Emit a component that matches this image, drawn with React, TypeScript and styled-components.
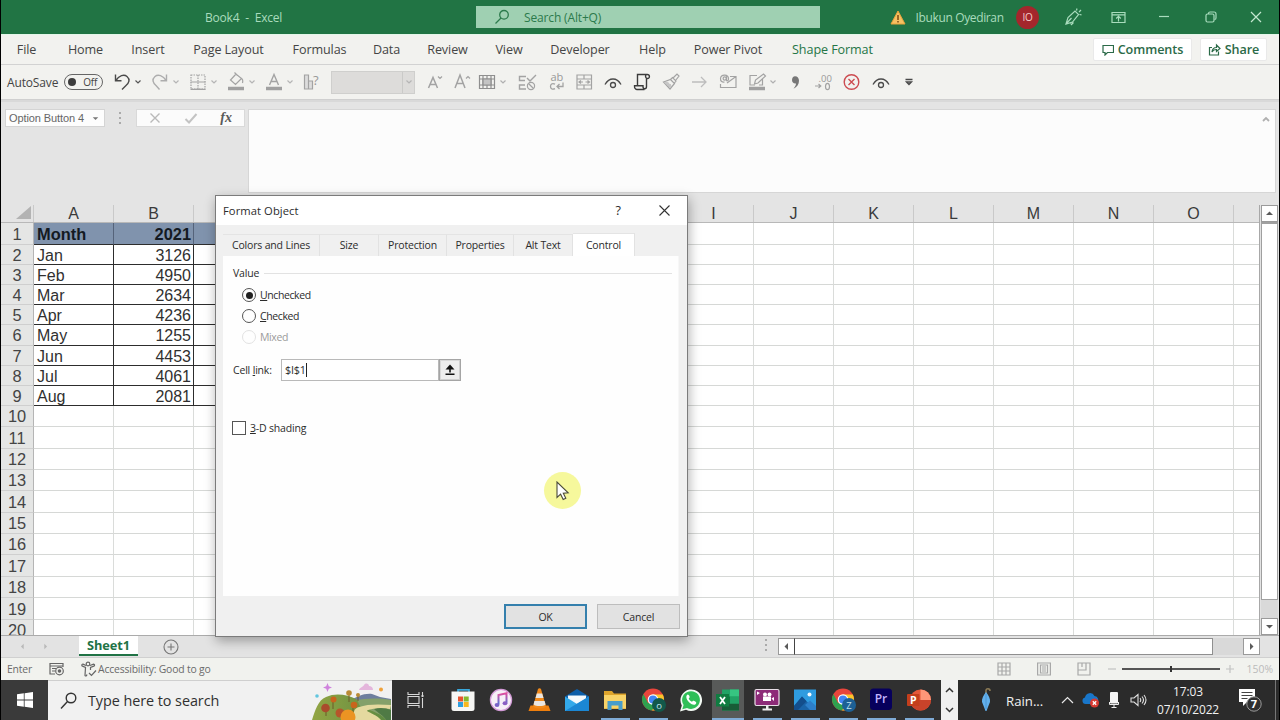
import React from "react";
import styled, { createGlobalStyle, css } from "styled-components";

const Global = createGlobalStyle`
  * { box-sizing: border-box; }
  body { margin: 0; background: #000; overflow: hidden; }
  svg { display: block; flex: none; }
`;
const ui = `"Open Sans", "Noto Sans", sans-serif`;
const arial = `"Liberation Sans", Arial, sans-serif`;

const Screen = styled.div`
  position: relative;
  width: 1280px;
  height: 720px;
  padding: 0 1px;
  background: #000;
  display: flex;
  flex-direction: column;
  overflow: hidden;
  font-family: ${ui};
  white-space: nowrap;
`;

/* ---------- title bar ---------- */
const TitleBar = styled.header`
  height: 34px;
  flex: none;
  background: #217444;
  display: flex;
  align-items: center;
  color: #a9dcbd;
  font-size: 12px;
`;
const DocName = styled.div`
  width: 475px;
  flex: none;
  padding-left: 204px;
  letter-spacing: -0.2px;
  white-space: pre;
`;
const SearchField = styled.div`
  width: 344px;
  flex: none;
  height: 22px;
  background: #9fd0b2;
  color: #2c7a4c;
  display: flex;
  align-items: center;
  padding-left: 18px;
  gap: 14px;
  letter-spacing: -0.15px;
`;
const Account = styled.div`
  flex: none;
  margin-left: 70px;
  display: flex;
  align-items: center;
  gap: 9.5px;
  letter-spacing: -0.36px;
  width: 149px;
`;
const Avatar = styled.div`
  width: 23px;
  height: 23px;
  flex: none;
  border-radius: 50%;
  background: #a4262c;
  color: #f3cccc;
  font-size: 10px;
  display: grid;
  place-items: center;
  margin-left: auto;
`;
const WindowTools = styled.div`
  display: flex;
  align-items: center;
  margin-left: 11px;
`;
const WindowTool = styled.div<{ $w: number }>`
  width: ${(p) => p.$w}px;
  display: grid;
  place-items: center;
`;

/* ---------- ribbon tabs ---------- */
const MenuBar = styled.nav`
  height: 31px;
  flex: none;
  background: #f2f2ef;
  border-top: 1px solid #e4f7ea;
  border-bottom: 1px solid #d2d2d2;
  display: flex;
  align-items: center;
  padding-left: 1px;
`;
const MenuItem = styled.div<{ $w: number; $green?: boolean }>`
  width: ${(p) => p.$w}px;
  text-align: center;
  font-size: 12.6px;
  letter-spacing: -0.1px;
  color: ${(p) => (p.$green ? "#257546" : "#454545")};
`;
const MenuButton = styled.div<{ $w: number; $ml: number }>`
  width: ${(p) => p.$w}px;
  margin-left: ${(p) => p.$ml}px;
  height: 23px;
  background: #fff;
  border: 1px solid #e9e9e9;
  border-radius: 2px;
  color: #2b6a48;
  font-weight: 600;
  font-size: 12.6px;
  letter-spacing: -0.05px;
  display: flex;
  align-items: center;
  justify-content: center;
  gap: 4px;
`;

/* ---------- quick access ---------- */
const QuickBar = styled.div`
  height: 35px;
  flex: none;
  background: #f2f2ef;
  border-bottom: 1px solid #cfcfcf;
  display: flex;
  align-items: center;
  padding-left: 6px;
`;
const AutoSave = styled.div`
  width: 102.5px;
  display: flex;
  align-items: center;
  gap: 6px;
  font-size: 12px;
  letter-spacing: -0.15px;
  color: #444;
`;
const Toggle = styled.div`
  width: 39px;
  height: 16px;
  border: 1px solid #666;
  border-radius: 8px;
  display: flex;
  align-items: center;
  gap: 7px;
  padding-left: 3px;
  font-size: 10px;
  &::before {
    content: "";
    width: 8px;
    height: 8px;
    border-radius: 50%;
    background: #3c3c3c;
  }
`;
const Tool = styled.div<{ $gap: number }>`
  margin-left: ${(p) => p.$gap}px;
  display: flex;
  align-items: center;
`;
const Combo = styled.div`
  width: 84px;
  height: 23px;
  margin-left: 7px;
  background: #dddcda;
  border: 1px solid #cfcfcd;
  display: flex;
  justify-content: flex-end;
`;
const ComboArrow = styled.div`
  width: 12px;
  border-left: 1px solid #cacac8;
  display: grid;
  place-items: center;
`;

/* ---------- formula area ---------- */
const FormulaArea = styled.div`
  height: 105px;
  flex: none;
  background: #e4e4e4;
  border-top: 2px solid #d9d9d9;
  display: flex;
  align-items: flex-start;
  padding: 7px 2px 0 4px;
`;
const NameBox = styled.div`
  width: 100px;
  height: 18px;
  flex: none;
  background: #fdfdfd;
  border: 1px solid #d4d4d4;
  font-family: ${arial};
  font-size: 11px;
  letter-spacing: -0.1px;
  color: #666;
  display: flex;
  align-items: center;
  justify-content: space-between;
  padding: 0 5px 0 3px;
`;
const FormulaTools = styled.div`
  width: 109px;
  height: 18px;
  flex: none;
  margin-left: 15px;
  background: #fbfbfb;
  border: 1px solid #d9d9d9;
  display: flex;
  align-items: center;
`;
const FormulaTool = styled.div`
  width: 36px;
  display: grid;
  place-items: center;
`;
const FxLabel = styled.span`
  font: italic 700 14px/16px "Liberation Serif", serif;
  color: #5a5a5a;
`;
const Dots = styled.div`
  width: 2px;
  height: 12px;
  flex: none;
  margin: 3px 0 0 14px;
  background: repeating-linear-gradient(#aaa 0 2px, transparent 2px 5px);
`;
const FormulaInput = styled.div`
  width: 1028px;
  height: 84px;
  flex: none;
  margin-left: 3px;
  background: #fcfcfc;
  border: 1px solid #d6d6d6;
  display: flex;
  justify-content: flex-end;
  padding: 6px 5px;
`;

/* ---------- grid ---------- */
const Workbook = styled.main`
  height: 430px;
  flex: none;
  display: flex;
  background: #e3e3e3;
`;
const Sheet = styled.div`
  width: 1259px;
  background: #fff;
  border-right: 1px solid #a8a8a8;
  overflow: hidden;
`;
const HeaderRow = styled.div`
  height: 18px;
  display: flex;
  background: #e4e4e4;
  border-bottom: 1px solid #b8b8b8;
`;
const Corner = styled.div`
  width: 33px;
  border-right: 1px solid #c9c9c9;
  display: flex;
  justify-content: flex-end;
  align-items: flex-end;
  padding: 0 2px 3px 0;
`;
const ColumnHead = styled.div`
  width: 80px;
  flex: none;
  border-right: 1px solid #c9c9c9;
  font: 16px/18px ${arial};
  text-align: center;
  color: #3a3a3a;
`;
const Row = styled.div<{ $h: number }>`
  height: ${(p) => p.$h}px;
  display: flex;
`;
const RowHead = styled.div`
  width: 33px;
  flex: none;
  background: #e5e6e5;
  border-right: 1px solid #b5b5b5;
  border-bottom: 1px solid #cfcfcf;
  display: flex;
  align-items: center;
  justify-content: center;
  font: 16.4px/18px ${arial};
  color: #444;
`;
const Cell = styled.div<{ $data?: boolean; $head?: boolean; $right?: boolean }>`
  width: 80px;
  flex: none;
  border-right: 1px solid #dadcda;
  border-bottom: 1px solid #d6d8d6;
  ${(p) =>
    p.$data &&
    css`
      border-color: #2d2d2d;
      color: #303030;
      font: 16px/18px ${arial};
      display: flex;
      align-items: center;
      justify-content: ${p.$right ? "flex-end" : "flex-start"};
      padding: ${p.$right ? "2px 2px 0 0" : "2px 0 0 3px"};
    `}
  ${(p) =>
    p.$head &&
    css`
      background: #8093ad;
      font-weight: 700;
      font-size: 16.4px;
      color: #141a22;
      border-right-color: #55637a;
      padding-top: 0;
    `}
`;
const VScroll = styled.div`
  width: 17px;
  margin-left: 1px;
  display: flex;
  flex-direction: column;
  justify-content: space-between;
  background: #d9d9d9;
`;
const ScrollButton = styled.div`
  width: 17px;
  height: 17px;
  flex: none;
  background: #fff;
  border: 1px solid #9a9a9a;
  display: grid;
  place-items: center;
`;
const VThumb = styled.div`
  height: 378px;
  margin-bottom: auto;
  background: #fff;
  border: 1px solid #a0a0a0;
  border-top-width: 2px;
`;

/* ---------- sheet tabs + status ---------- */
const SheetBar = styled.div`
  height: 23px;
  flex: none;
  background: #e3e3e3;
  border-top: 1px solid #ababab;
  border-bottom: 1px solid #d0d0d0;
  display: flex;
`;
const TabArrows = styled.div`
  width: 78px;
  display: flex;
  align-items: center;
  padding-left: 18px;
  gap: 16px;
`;
const SheetTab = styled.div`
  width: 59px;
  height: 20px;
  background: #fff;
  border-bottom: 2px solid #217346;
  color: #217346;
  font-weight: 700;
  font-size: 12.8px;
  letter-spacing: -0.1px;
  line-height: 19px;
  text-align: center;
`;
const AddSheet = styled.div`
  width: 65px;
  display: grid;
  place-items: center;
`;
const BarSpacer = styled.div`
  width: 548px;
`;
const HScroll = styled.div`
  width: 482px;
  height: 17px;
  margin: 2px 0 0 11px;
  display: flex;
  justify-content: space-between;
  background: #d9d9d9;
`;
const HThumb = styled.div`
  width: 419px;
  flex: none;
  margin: 0 auto 0 -1px;
  background: #fff;
  border: 1px solid #8f8f8f;
  border-left: 1px solid #444;
`;
const StatusBar = styled.footer`
  height: 22px;
  flex: none;
  background: #f1f2ee;
  display: flex;
  align-items: center;
  color: #6b6b6b;
  font-size: 10.4px;
  padding-left: 6px;
`;
const StatusText = styled.div<{ $w: number }>`
  width: ${(p) => p.$w}px;
  letter-spacing: -0.18px;
`;
const AccessIcon = styled.div`
  margin: 0 1px 0 16px;
`;
const ViewModes = styled.div`
  margin-left: auto;
  display: flex;
  gap: 26px;
`;
const Zoomer = styled.div`
  display: flex;
  align-items: center;
  gap: 4px;
  margin: 0 6px 0 17.5px;
  color: #bbb;
`;
const Slider = styled.div`
  width: 98px;
  height: 2px;
  background: #555;
  display: flex;
  justify-content: center;
  margin: 0 2px;
  &::after {
    content: "";
    width: 2px;
    height: 6px;
    margin-top: -2px;
    background: #333;
  }
`;
const Percent = styled.span`
  margin-left: 8.500px;
`;

/* ---------- taskbar ---------- */
const Taskbar = styled.div`
  height: 40px;
  flex: none;
  background: #303030;
  display: flex;
  color: #f2f2f2;
`;
const StartButton = styled.div`
  width: 47px;
  background: #3a3a3a;
  display: grid;
  place-items: center;
`;
const TaskSearch = styled.div`
  width: 344px;
  background: #f1f1f1;
  border-top: 1px solid #cfcfcf;
  display: flex;
  align-items: center;
  color: #303030;
  font-size: 14.4px;
  padding-left: 12px;
`;
const TaskSearchText = styled.span`
  width: 224px;
  margin-left: 11px;
  letter-spacing: -0.06px;
`;
const TaskView = styled.div`
  width: 52px;
  display: grid;
  place-items: center;
  padding-right: 4px;
`;
const TaskApp = styled.div<{ $run?: boolean; $active?: boolean }>`
  width: 38px;
  display: flex;
  flex-direction: column;
  align-items: center;
  padding-top: 7px;
  &::after {
    content: "";
    width: ${(p) => (p.$active ? 32 : 29)}px;
    height: 2px;
    margin-top: 5px;
    background: ${(p) => (p.$run ? "#7fabd6" : "transparent")};
  }
  ${(p) =>
    p.$active &&
    css`
      background: #585a59;
      width: 32px;
      margin: 0 4px 0 2px;
    `}
`;
const TaskScroller = styled.div`
  width: 17px;
  margin-left: 3px;
  background: #f0f0f0;
  display: flex;
  flex-direction: column;
  justify-content: space-around;
  align-items: center;
`;
const Tray = styled.div`
  flex: 1;
  background: #2b2b2b;
  display: flex;
  align-items: center;
  padding-left: 21px;
`;
const TrayItem = styled.div<{ $w: number }>`
  width: ${(p) => p.$w}px;
  flex: none;
  display: grid;
  place-items: center;
`;
const Weather = styled.div`
  width: 61px;
  flex: none;
  padding: 2px 0 0 13px;
  font-size: 13.2px;
`;
const Clock = styled.div`
  width: 76px;
  flex: none;
  text-align: center;
  font-size: 11.9px;
  line-height: 18px;
  letter-spacing: -0.1px;
`;
const DesktopEdge = styled.div`
  width: 1px;
  height: 40px;
  margin-left: auto;
  margin-right: 3px;
  background: #777;
`;

/* ---------- dialog ---------- */
const Dialog = styled.section`
  position: absolute;
  left: 215px;
  top: 195px;
  width: 473px;
  height: 442px;
  background: #f0f0f0;
  border: 1px solid #7b7b7b;
  box-shadow: 1px 4px 11px rgba(0, 0, 0, 0.32);
  display: flex;
  flex-direction: column;
  font-size: 10.5px;
  letter-spacing: -0.18px;
  color: #2c2c2c;
`;
const DialogTitle = styled.div`
  height: 29px;
  background: #fff;
  display: flex;
  align-items: center;
  padding: 0 16px 0 7px;
  font-size: 11.2px;
  letter-spacing: 0.08px;
`;
const DialogHelp = styled.span`
  margin: 0 37px 0 auto;
  font-size: 12.6px;
`;
const DialogTabs = styled.div`
  height: 31px;
  padding: 8px 0 0 7px;
  display: flex;
  align-items: flex-end;
`;
const DialogTab = styled.div<{ $w: number; $on?: boolean }>`
  width: ${(p) => p.$w}px;
  height: ${(p) => (p.$on ? 23 : 22)}px;
  line-height: ${(p) => (p.$on ? 22 : 21)}px;
  text-align: center;
  background: ${(p) => (p.$on ? "#fff" : "#f0f0f0")};
  border-top: 1px solid #e4e4e4;
  border-right: 1px solid #e2e2e2;
`;
const DialogPanel = styled.div`
  margin: 0 8px 0 7px;
  height: 340px;
  background: #fefefe;
  border-right: 1px solid #f7f7f7;
  padding: 10px 6px 0 10px;
`;
const GroupTitle = styled.div`
  display: flex;
  align-items: center;
  gap: 5px;
  height: 14px;
  &::after {
    content: "";
    flex: 1;
    height: 1px;
    background: #e2e2e2;
  }
`;
const Options = styled.div`
  padding: 5px 0 0 9px;
  letter-spacing: -0.4px;
`;
const Option = styled.div<{ $off?: boolean }>`
  height: 20.7px;
  display: flex;
  align-items: center;
  gap: 4px;
  color: ${(p) => (p.$off ? "#9b9b9b" : "#2c2c2c")};
`;
const Radio = styled.i<{ $on?: boolean; $off?: boolean }>`
  width: 14px;
  height: 14px;
  border-radius: 50%;
  border: 1px solid ${(p) => (p.$off ? "#e2e2e2" : "#555")};
  display: grid;
  place-items: center;
  &::after {
    content: "";
    width: 7px;
    height: 7px;
    border-radius: 50%;
    background: ${(p) => (p.$on ? "#222" : "transparent")};
  }
`;
const LinkRow = styled.div`
  display: flex;
  align-items: center;
  margin-top: 12px;
`;
const LinkLabel = styled.div`
  width: 48px;
`;
const LinkInput = styled.div`
  width: 158px;
  height: 22px;
  border: 1px solid #b9b9b9;
  background: #fff;
  display: flex;
  align-items: center;
  padding: 0 0 1px 3px;
  font-size: 10.8px;
`;
const Caret = styled.i`
  width: 1px;
  height: 14px;
  background: #222;
`;
const RefButton = styled.div`
  width: 22px;
  height: 22px;
  background: #ededed;
  border: 1px solid #a5a5a5;
  box-shadow: inset -1px -1px 0 #cfcfcf, inset 1px 1px 0 #d8d8d8;
  display: grid;
  place-items: center;
`;
const CheckRow = styled.div`
  display: flex;
  align-items: center;
  gap: 4px;
  margin: 40px 0 0 -1px;
`;
const CheckBox = styled.i`
  width: 14px;
  height: 14px;
  border: 1px solid #555;
  background: #fff;
`;
const DialogButtons = styled.div`
  display: flex;
  justify-content: flex-end;
  gap: 10px;
  padding: 8px 7px 0 0;
`;
const DialogButton = styled.div<{ $primary?: boolean }>`
  width: 83px;
  height: 25px;
  line-height: ${(p) => (p.$primary ? 22 : 24)}px;
  text-align: center;
  background: #e2e2e2;
  border: ${(p) => (p.$primary ? "2px solid #3580ad" : "1px solid #bdbdbd")};
`;
const Pointer = styled.div`
  position: absolute;
  left: 544px;
  top: 472px;
  width: 37px;
  height: 37px;
  border-radius: 50%;
  background: #f6f89c;
  padding: 9px 0 0 12px;
`;

/* ---------- drawings ---------- */
type IconProps = { w?: number; h?: number; vb?: string; c?: string; sw?: number; children: React.ReactNode };
const Ico = ({ w = 24, h = 24, vb, c = "#a3a3a3", sw = 1.2, children }: IconProps) => (
  <svg width={w} height={h} viewBox={vb ?? `0 0 ${w} ${h}`} fill="none" stroke={c} strokeWidth={sw}>
    {children}
  </svg>
);
const Chevron = ({ c = "#a8a8a8" }: { c?: string }) => (
  <Ico w={8} h={8} c={c} sw={1.2}><path d="M1.500 2.500 4 5l2.500-2.500" /></Ico>
);
const Triangle = ({ d, c = "#5a5a5a", s = 9 }: { d: string; c?: string; s?: number }) => (
  <svg width={s} height={s} viewBox="0 0 9 9"><path d={d} fill={c} /></svg>
);
const DOWN = "M1 3h7L4.500 6.500z";
const UP = "M1 6h7L4.500 2.500z";
const LEFT = "M6 1v7L2.500 4.500z";
const RIGHT = "M3 1v7l3.500-3.500z";

const Letter = ({ x, y, s, children, c = "#999" }: { x: number; y: number; s: number; c?: string; children: string }) => (
  <text x={x} y={y} fontSize={s} fill={c} stroke="none" fontFamily="Open Sans, sans-serif">{children}</text>
);
const Eye = () => (
  <Ico c="#4a4a4a" sw={1.3}><path d="M4 14.500C6 11 9 9 12 9s6 2 8 5.500" /><circle cx="12" cy="15" r="2.500" /></Ico>
);

type ToolDef = { gap: number; arrow?: string; icon: React.ReactNode };
const toolsLeft: ToolDef[] = [
  { gap: 0, arrow: "#555", icon: <Ico c="#4a4a4a" sw={1.4}><path d="M5.500 4.500v6.300h6M5.800 10.500C9 5.500 14 4 17 6.500c3.500 3 2 6.500-1 9l-4 4" /></Ico> },
  { gap: 6.5, arrow: "#b5b5b5", icon: <Ico c="#adadad" sw={1.4}><path d="M18.500 4.500v6.300h-6M18.200 10.500C15 5.500 10 4 7 6.500c-3.500 3-2 6.500 1 9l3.500 4" /></Ico> },
  { gap: 5.5, arrow: "#b5b5b5", icon: <Ico><path d="M5 5h14v14H5zM12 5v14" strokeDasharray="1.500 1" /><path d="M4.500 19.300h15M4.500 12h15" /></Ico> },
  { gap: 6.5, arrow: "#b5b5b5", icon: <Ico><path d="m12 4-5.500 6 5 4.500 6-6zM10.500 2.500l3 3M17 8c2 1 2 3 1.500 5" /><path d="M4 18.500h16" strokeWidth="3.500" stroke="#a0a0a0" /></Ico> },
  { gap: 6, arrow: "#b5b5b5", icon: <Ico><path d="M7.500 15 12 4.500 16.500 15M9 11.500h6" strokeWidth="1.400" /><path d="M4 18.500h16" strokeWidth="3.500" stroke="#a0a0a0" /></Ico> },
  { gap: 6, icon: <Ico><path d="M4.500 5h4v14h-4zM8.500 11h4v8h-4z" fill="#ddd" /><Letter x={13} y={15} s={13}>?</Letter></Ico> },
];
const toolsRight: ToolDef[] = [
  { gap: 7, icon: <Ico><path d="M6.500 18 11 7.500 15.500 18M8 14.500h6" strokeWidth="1.500" /><path d="m16 6.500 2 2 2-2" /></Ico> },
  { gap: 4, icon: <Ico><path d="M5 18 10 5l5 13M6.800 13.500h6.400" strokeWidth="1.500" /><path d="m16 8.500 2-2 2 2" /></Ico> },
  { gap: 1, arrow: "#b0b0b0", icon: <Ico c="#8f8f8f"><path d="M4.500 5.500h15v13h-15zM4.500 9h15M4.500 15h15M8 5.500v13M12 5.500V9M16 5.500v13M12 15v3.500" /><path d="M8 9h8v6H8z" fill="#c4c4c4" /></Ico> },
  { gap: 8, icon: <Ico><path d="M11 6.500H4.500v4H10M10 15H4.500v4H11M12 8l3 3 6-6" strokeWidth="1.400" /><circle cx="16" cy="16" r="3.600" /><path d="m13.500 13.500 5 5" /></Ico> },
  { gap: 6, icon: <Ico><Letter x={5.5} y={11} s={11}>ab</Letter><path d="M10 14.200c-3-1.500-4.500.3-4.500 2.200s1.500 3.700 4.500 2.200M18 12.500v4h-6M14.500 14l-2.500 2.500 2.500 2.500" strokeWidth="1.300" /></Ico> },
  { gap: 3, icon: <Ico><path d="M5 5h14.500v14H5zM5 9h14.500M5 15h14.500M12 5v4M12 15v4" /><path d="M7 12h4M9 10.500 7 12l2 1.500M17.500 12h-4M15.500 10.500l2 1.500-2 1.500" /></Ico> },
  { gap: 5, icon: <Eye /> },
  { gap: 5, icon: <Ico c="#3c3c3c" sw={1.4}><path d="M7.500 15.800V4.500h9.700c2.900 0 2.900 4 .3 4H16.500v8c0 3-3.500 3-3.500 0v-.7H4.500c-.5 3.700 2.500 3.700 4 3.700h6M16 5c-.8 1-.5 2.500.5 3.300" /></Ico> },
  { gap: 5, icon: <Ico><path d="m4.500 12 7-2.500 4 4-4.500 5.500zM11.500 9.500l2-2 3.500 3.500-2 2.500M14 8l4-4 2 2-3.500 4.500M7 14.500 9.500 13M9 16.500l2.500-2" /><path d="m5 12.500 6 5.500 1.500-2.500-4.500-4z" fill="#c6c6c6" stroke="none" /></Ico> },
  { gap: 4, icon: <Ico c="#bdbdbd" sw={1.3}><path d="M5 12h14M14 7l5 5-5 5" /></Ico> },
  { gap: 5, icon: <Ico><path d="M14 6.500h6v11H4.500V14M11 13l9-6.500M16 6.500h4v3" /><path d="M10.500 6.300v3.700c0 1.500 2 1 2-1C12.500 4 5 4 4.500 8.500c-.2 3 2 4 4 3.500" /><circle cx="8.700" cy="8.500" r="1.600" /></Ico> },
  { gap: 5, arrow: "#b0b0b0", icon: <Ico><path d="M12 5.500H5v9.500h5M17.500 9v6H14" /><path d="m9.500 14 1-4 8-6 2 2-7.500 7z" /><path d="M4 18.500h16" strokeWidth="3.500" stroke="#a0a0a0" /></Ico> },
  { gap: 7, icon: <Ico><path d="M11 6.200c2.500 0 4 1.800 4 4.500 0 3.500-2 6.500-5.500 8 1.500-2 2.500-3.500 2.500-5.200-2.200.4-4-1-4-3.500 0-2.200 1.300-3.800 3-3.800z" fill="#777" stroke="none" /></Ico> },
  { gap: 3, icon: <Ico><Letter x={7.5} y={11.5} s={9.5}>.00</Letter><ellipse cx="16.500" cy="16.500" rx="2" ry="3.200" /><path d="M4 16h6M7.500 14l2.300 2-2.300 2" /></Ico> },
  { gap: 4, icon: <Ico c="#cc4b50" sw={1.4}><circle cx="12.500" cy="12" r="7.300" /><path d="m9.500 9 6 6M15.500 9l-6 6" /></Ico> },
  { gap: 6, icon: <Eye /> },
  { gap: 4, icon: <Ico c="#4a4a4a" sw={1.3}><path d="M8.500 9.500h7M9.500 12l2.500 2.500 2.500-2.500z" /></Ico> },
];

const Chrome = ({ badge, fill }: { badge: string; fill: string }) => (
  <svg width="28" height="26" viewBox="-1 0 28 26">
    <circle cx="13" cy="12.500" r="11" fill="#e8453c" />
    <path d="M3.500 7A11 11 0 0 0 12 23.500l4.500-7.500H8z" fill="#2fa04f" />
    <path d="M13 7.500h9.800A11 11 0 0 1 12 23.500l5.500-8z" fill="#fbc52c" />
    <circle cx="13" cy="12.500" r="5.300" fill="#fff" />
    <circle cx="13" cy="12.500" r="4.100" fill="#4285f4" />
    <circle cx="19" cy="18" r="7" fill={fill} />
    <text x="19" y="21.500" fontSize="9.500" textAnchor="middle" fill="#bfe3ef" fontFamily="Open Sans, sans-serif">{badge}</text>
  </svg>
);

type AppDef = { run?: boolean; active?: boolean; icon: React.ReactNode };
const apps: AppDef[] = [
  { icon: <svg width="26" height="26" viewBox="0 0 26 26"><path d="M8 6V2.800h11V6" fill="none" stroke="#39a8dc" strokeWidth="1.700" /><path d="M1.500 4.500h23v17a2.500 2.500 0 0 1-2.500 2.500H4a2.500 2.500 0 0 1-2.500-2.500z" fill="#f6f6f4" /><path d="M8 9.500h5v5H8z" fill="#e8532f" /><path d="M13.700 9.500h5v5h-5z" fill="#86b92c" /><path d="M8 15h5v5H8z" fill="#2f9fe0" /><path d="M13.700 15h5v5h-5z" fill="#f8b81e" /></svg> },
  { icon: <svg width="26" height="26" viewBox="0 0 26 26"><defs><linearGradient id="tune" x1="0" x2="0" y1="0" y2="1"><stop stopColor="#e04f9f" /><stop offset="1" stopColor="#4d78d6" /></linearGradient></defs><circle cx="13" cy="13" r="10.600" fill="#f6eff7" stroke="#d49bd8" strokeWidth="1.200" /><path d="M10.500 17.500V8l8-1.700v9.500" fill="none" stroke="url(#tune)" strokeWidth="2" /><ellipse cx="9" cy="18" rx="2.400" ry="2" fill="#7a62c8" /><ellipse cx="17" cy="16.300" rx="2.400" ry="2" fill="#8a5fc4" /></svg> },
  { icon: <svg width="26" height="26" viewBox="0 0 26 26"><path d="M4.500 18.500h18l2 5.500h-22z" fill="#ef7f0d" /><path d="M12 2c.5-1 2.500-1 3 0l5 17.500c-2 2.500-11 2.500-13 0z" fill="#f28a1b" /><path d="M10.800 6.500h5.400l1.300 4.500H9.500zM8.400 14h10.200l1 3.500c-2 2-10 2-12 0z" fill="#ebe6e0" /></svg> },
  { icon: <svg width="28" height="26" viewBox="0 0 28 26"><path d="M2 9.500 14 2l12 7.500V17H2z" fill="#0d5ea8" /><path d="M5 8.500h18V18H5z" fill="#f0f6fa" /><path d="M2 9.500 14 17l12-7.500V24H2z" fill="#33a9ea" /><path d="m2 24 13-8 11-6.500V24z" fill="#1b87d4" /><path d="m4.500 9 9.500 7 9.500-7z" fill="#f6fafc" /></svg> },
  { run: true, icon: <svg width="26" height="26" viewBox="0 0 26 26"><path d="M2 4h8l2 2.500h12V22H2z" fill="#dda42c" /><path d="M2 8h22v13.500H2z" fill="#f8d368" /><path d="M5.500 23v-9h15v9h-4v-4.500h-7V23z" fill="#489dcb" /></svg> },
  { run: true, icon: <Chrome badge="o" fill="#12584a" /> },
  { icon: <svg width="26" height="26" viewBox="0 0 26 26"><path d="m2 24.500 1.800-6A10.800 10.800 0 1 1 8 22.700z" fill="#f3faf4" /><path d="m4.300 22.300 1.300-4.300A8.900 8.900 0 1 1 9 21z" fill="#2fbf58" /><path d="M9.700 7.500c-3 1.800-.5 6.200 1.900 8.200 2.300 2 5.400 3 6.600.5.600-1.500-2.700-3-3.200-2.400l-1 1c-1.200-.3-3-2-3.300-3.200l.9-1c.4-.7-.7-3.400-1.900-3.100z" fill="#fff" /></svg> },
  { run: true, active: true, icon: <svg width="24" height="26" viewBox="0 0 24 26"><path d="M6 2.500h17v21H6z" fill="#21a366" /><path d="M14 2.500h9v7h-9z" fill="#36c481" /><path d="M6 9.500h8v7H6z" fill="#107c41" /><path d="M6 16.500h17v7H6z" fill="#185c37" /><path d="M14 9.500h9v7h-9z" fill="#21a366" /><path d="M0 7h13v12.500H0z" fill="#107c41" /><path d="m4 10 5 7M9 10l-5 7" stroke="#fff" strokeWidth="1.800" /></svg> },
  { run: true, icon: <svg width="26" height="26" viewBox="0 0 26 26"><rect x="1" y="2.500" width="24" height="16" rx="1.500" fill="#8d2b78" stroke="#e9dfe8" strokeWidth="1.200" /><path d="M12 18.500h2.500v3H18v2H8.500v-2H12z" fill="#eee" /><circle cx="11" cy="7.500" r="2" fill="#fff" /><circle cx="15.500" cy="7.500" r="2" fill="#fff" /><path d="M9 9.500h8v4.500H9zM17.500 11.500l2.500-1.500v4zM3 4.500l3 1.500-3 2z" fill="#fff" /></svg> },
  { run: true, icon: <svg width="24" height="26" viewBox="0 0 24 26"><path d="M1 2.500h22V23H1z" fill="#2f9ce0" /><circle cx="16.500" cy="7.500" r="2" fill="#f4fbff" /><path d="M1 19 9 9.500l13 13.500H1z" fill="#1a64a8" /><path d="m12 18 5-4.500 6 5.500v4h-6z" fill="#2d7fca" /><path d="M1 19 9 9.500l4.500 4.700L5 23H1z" fill="#134e8c" /></svg> },
  { run: true, icon: <Chrome badge="Z" fill="#1d6095" /> },
  { run: true, icon: <svg width="24" height="26" viewBox="0 0 24 26"><rect x="1" y="1.500" width="22" height="21.500" rx="3.500" fill="#07005c" /><text x="12" y="16" fontSize="12" fontWeight="600" textAnchor="middle" fill="#c3b4ff" fontFamily="Open Sans, sans-serif">Pr</text></svg> },
  { run: true, icon: <svg width="26" height="26" viewBox="0 0 26 26"><circle cx="14.500" cy="13" r="10.500" fill="#e4583a" /><path d="M14.500 2.500A10.500 10.500 0 0 1 25 13H14.500z" fill="#ff9678" /><path d="M4 13h21a10.500 10.500 0 0 1-21 0z" fill="#c9432a" /><rect x="1" y="7" width="12.500" height="12" rx="1" fill="#c43e1c" /><text x="7.200" y="17" fontSize="10.500" fontWeight="700" textAnchor="middle" fill="#fff" fontFamily="Open Sans, sans-serif">P</text></svg> },
];

const SearchArt = () => (
  <svg width="79" height="39" viewBox="0 0 79 39">
    <defs><linearGradient id="hill" x1="0" x2="1"><stop stopColor="#93a544" /><stop offset="1" stopColor="#5e8a41" /></linearGradient></defs>
    <path d="M38 20c6-4 14-8 22-7l8 3 11 2v21H38z" fill="#6e7f9e" />
    <path d="M42 20c12-3 24-3 37-1v20H42z" fill="#84a06a" />
    <path d="M0 39c3-9 6-20 14-23 10-5 22-2 30 2 4 3 1 7 8 9 8 3 18 6 22 12z" fill="url(#hill)" />
    <path d="M36 39c10-5 2-10 11-13 8-3 20-3 32-2l-1 4c-12-1-22 0-23 2 3 2 10 4 14 9z" fill="#e4d99f" />
    <path d="M62 28c6-2 12-1 17 1v10H74c-2-4-8-7-12-11z" fill="#4f7a45" />
    <path d="m15.500 2 1.300 3.200L20 6.500l-3.200 1.300-1.300 3.200-1.300-3.200L11 6.500l3.200-1.300z" fill="#cf82dd" />
    <circle cx="5" cy="15" r="1.800" fill="#62c6df" /><circle cx="69" cy="8.500" r="2" fill="#efa13a" />
    <path d="M47 9c1-3 4-3 5-5 2-3 5-1 5 1 2 0 4 1 4 4z" fill="#e4b6dc" />
    <path d="M21 20v8M37 13v8M41 25v7M14 28v7M46 14v6" stroke="#6d5a28" strokeWidth="1" />
    <circle cx="21.500" cy="18.500" r="3" fill="#c8641d" /><circle cx="37" cy="12" r="2.800" fill="#b98a35" /><circle cx="46" cy="14" r="2" fill="#b98a35" />
    <circle cx="13.500" cy="27" r="4.300" fill="#a94b2c" /><circle cx="42" cy="24" r="3.300" fill="#c9641c" /><circle cx="28" cy="32" r="4.500" fill="#b6562a" /><circle cx="36" cy="36" r="7.500" fill="#eb9423" />
  </svg>
);

const menu: [string, number][] = [
  ["File", 49], ["Home", 69], ["Insert", 56], ["Page Layout", 105], ["Formulas", 77], ["Data", 57],
  ["Review", 65], ["View", 58], ["Developer", 84], ["Help", 61], ["Power Pivot", 90], ["Shape Format", 119],
];
/* C to H lie behind the dialog */
const columns = ["A", "B", "", "", "", "", "", "", "I", "J", "K", "L", "M", "N", "O"];
const rowHeights = [22, 20, 20, 20, 20, 21, 20, 20, 20, 21, 22, 21, 21, 22, 21, 21, 22, 21, 22, 20];
const data: [string, string][] = [
  ["Month", "2021"], ["Jan", "3126"], ["Feb", "4950"], ["Mar", "2634"], ["Apr", "4236"],
  ["May", "1255"], ["Jun", "4453"], ["Jul", "4061"], ["Aug", "2081"],
];

const Tools = ({ items }: { items: ToolDef[] }) => (
  <>
    {items.map((t, i) => (
      <Tool key={i} $gap={t.gap}>{t.icon}{t.arrow && <Chevron c={t.arrow} />}</Tool>
    ))}
  </>
);

const FormatObject = () => (
  <Dialog>
    <DialogTitle>
      Format Object
      <DialogHelp>?</DialogHelp>
      <Ico w={13} h={13} c="#333" sw={1.1}><path d="m1.500 1.500 10 10M11.500 1.500l-10 10" /></Ico>
    </DialogTitle>
    <DialogTabs>
      <DialogTab $w={97}>Colors and Lines</DialogTab>
      <DialogTab $w={59}>Size</DialogTab>
      <DialogTab $w={68}>Protection</DialogTab>
      <DialogTab $w={67}>Properties</DialogTab>
      <DialogTab $w={59}>Alt Text</DialogTab>
      <DialogTab $w={62} $on>Control</DialogTab>
    </DialogTabs>
    <DialogPanel>
      <GroupTitle>Value</GroupTitle>
      <Options>
        <Option><Radio $on /><span><u>U</u>nchecked</span></Option>
        <Option><Radio /><span><u>C</u>hecked</span></Option>
        <Option $off><Radio $off /><span>Mixed</span></Option>
      </Options>
      <LinkRow>
        <LinkLabel>Cell <u>l</u>ink:</LinkLabel>
        <LinkInput>$I$1<Caret /></LinkInput>
        <RefButton>
          <Ico w={12} h={12} c="#111" sw={1.6}><path d="M6 8.500V3M1.500 10.300h9" /><path d="M1.500 5.500 6 .5l4.500 5z" fill="#111" stroke="none" /></Ico>
        </RefButton>
      </LinkRow>
      <CheckRow><CheckBox /><span><u>3</u>-D shading</span></CheckRow>
    </DialogPanel>
    <DialogButtons>
      <DialogButton $primary>OK</DialogButton>
      <DialogButton>Cancel</DialogButton>
    </DialogButtons>
  </Dialog>
);

export default function App() {
  return (
    <Screen>
      <Global />
      <TitleBar>
        <DocName>{"Book4  -  Excel"}</DocName>
        <SearchField>
          <Ico w={16} h={16} c="#2c7a4c" sw={1.3}><circle cx="10" cy="5.800" r="4.300" /><path d="m7 9-5.500 5.500" /></Ico>
          Search (Alt+Q)
        </SearchField>
        <Account>
          <svg width="16" height="15" viewBox="0 0 16 15"><path d="M8 1 15 14H1z" fill="#f5c163" stroke="#e9a33a" /><path d="M8 5v5M8 11v1.600" stroke="#7a4a10" strokeWidth="1.500" /></svg>
          Ibukun Oyediran
          <Avatar>IO</Avatar>
        </Account>
        <WindowTools>
          <WindowTool $w={46}><Ico w={18} h={18} c="#a9dcbd"><path d="m2 16 2-6.500 7-6.500 3.500 3.500-6 7.500zM2 16l5.500-6M12.500 2.500 13 .5M15 4l2-2M15.500 6.500l2 .3M6 14.500l1.500 2 2-2" /></Ico></WindowTool>
          <WindowTool $w={44}><Ico w={15} h={13} c="#a9dcbd"><path d="M1 1.500h13v10H1zM1 3.800h13M7.500 10.500V5.500M5.200 7.500l2.300-2.200 2.300 2.200" /></Ico></WindowTool>
          <WindowTool $w={48}><Ico w={10} h={12} c="#a9dcbd"><path d="M0 5.500h10" /></Ico></WindowTool>
          <WindowTool $w={45}><Ico w={12} h={12} c="#a9dcbd"><rect x="1" y="3" width="8" height="8" rx="1.500" /><path d="M3.500 3V2.500Q3.500 1 5 1h4q2 0 2 2v4q0 1.500-1.500 1.500" /></Ico></WindowTool>
          <WindowTool $w={46}><Ico w={12} h={12} c="#c4e8d0"><path d="m1 1 10 10M11 1 1 11" /></Ico></WindowTool>
        </WindowTools>
      </TitleBar>

      <MenuBar>
        {menu.map(([label, w]) => (
          <MenuItem key={label} $w={w} $green={label === "Shape Format"}>{label}</MenuItem>
        ))}
        <MenuButton $w={99} $ml={201}>
          <Ico w={12} h={12} c="#2b6a48"><path d="M1 1.500h10.500v7h-6l-2.500 2.500v-2.500H1z" /></Ico>Comments
        </MenuButton>
        <MenuButton $w={67} $ml={8}>
          <Ico w={13} h={13} c="#2b6a48"><path d="M4 4.500H1.500v7.500h9V8.500M4 9c.3-3 2-4.500 4.500-4.500V2L12 5.500 8.500 8.500V6.500C6.500 6.500 5 7 4 9z" /></Ico>Share
        </MenuButton>
      </MenuBar>

      <QuickBar>
        <AutoSave>AutoSave<Toggle>Off</Toggle></AutoSave>
        <Tools items={toolsLeft} />
        <Combo><ComboArrow><Chevron c="#b5b5b5" /></ComboArrow></Combo>
        <Tools items={toolsRight} />
      </QuickBar>

      <FormulaArea>
        <NameBox>Option Button 4<Triangle d={DOWN} c="#777" s={7} /></NameBox>
        <Dots />
        <FormulaTools>
          <FormulaTool><Ico w={12} h={12} c="#b9b9b9" sw={1.4}><path d="m1.500 1.500 9 9M10.500 1.500l-9 9" /></Ico></FormulaTool>
          <FormulaTool><Ico w={14} h={12} c="#c3c3c3" sw={2}><path d="m1.500 7 3.500 3.500L12.500 2" /></Ico></FormulaTool>
          <FormulaTool><FxLabel>fx</FxLabel></FormulaTool>
        </FormulaTools>
        <FormulaInput><Ico w={8} h={6} c="#b0b0b0" sw={1.8}><path d="m1 5 3-3 3 3" /></Ico></FormulaInput>
      </FormulaArea>

      <Workbook>
        <Sheet>
          <HeaderRow>
            <Corner><svg width="15" height="13"><path d="M15 0v13H0z" fill="#b3b3b3" /></svg></Corner>
            {columns.map((c, i) => <ColumnHead key={i}>{c}</ColumnHead>)}
          </HeaderRow>
          {rowHeights.map((h, r) => (
            <Row key={r} $h={h}>
              <RowHead>{r + 1}</RowHead>
              {columns.map((_, i) => {
                const inTable = r < data.length && i < 4;
                return (
                  <Cell key={i} $data={inTable} $head={inTable && r === 0} $right={i > 0}>
                    {inTable && i < 2 ? data[r][i] : null}
                  </Cell>
                );
              })}
              <Cell />
            </Row>
          ))}
        </Sheet>
        <VScroll>
          <ScrollButton><Triangle d={UP} /></ScrollButton>
          <VThumb />
          <ScrollButton><Triangle d={DOWN} /></ScrollButton>
        </VScroll>
      </Workbook>

      <SheetBar>
        <TabArrows><Triangle d={LEFT} c="#b9b9b9" s={7} /><Triangle d={RIGHT} c="#b9b9b9" s={7} /></TabArrows>
        <SheetTab>Sheet1</SheetTab>
        <AddSheet><Ico w={16} h={16} c="#777" sw={1.1}><circle cx="8" cy="8" r="7" /><path d="M8 4.500v7M4.500 8h7" /></Ico></AddSheet>
        <BarSpacer />
        <Dots />
        <HScroll>
          <ScrollButton><Triangle d={LEFT} /></ScrollButton>
          <HThumb />
          <ScrollButton><Triangle d={RIGHT} /></ScrollButton>
        </HScroll>
      </SheetBar>

      <StatusBar>
        <StatusText $w={42}>Enter</StatusText>
        <Ico w={16} h={14} c="#666" sw={1.2}><path d="M6 12H1V1.500h13V5M1 4h13M3 6.500h4M3 9h3" /><circle cx="10.500" cy="9" r="3.800" /><circle cx="10.500" cy="9" r="1.200" fill="#666" /></Ico>
        <AccessIcon><Ico w={16} h={16} c="#666" sw={1.2}><circle cx="7" cy="3" r="1.800" /><path d="M5 4.500 2 3.200C.5 3 .5 5 1.500 5.200L4.500 6.500 4 14.500c.5 1 1.500.5 2-1M9 4.500l3.500-1.300c1.500 0 1.300 1.800.3 2L9.500 6.500V9M8 12l2.500 2.500L15 9.500" /></Ico></AccessIcon>
        <StatusText $w={200}>Accessibility: Good to go</StatusText>
        <ViewModes>
          <Ico w={14} h={14} c="#a8a8a8"><path d="M1 1h12v12H1zM5 1v12M9 1v12M1 5h12M1 9h12" /></Ico>
          <Ico w={14} h={14} c="#a8a8a8"><path d="M.6 1h12.800v12H.6zM3.500 3h7v8h-7zM5 5h4M5 7h4M5 9h4" /></Ico>
          <Ico w={14} h={14} c="#a8a8a8"><path d="M1 1h12v12H1zM1 8h8V1M5 1v4" /></Ico>
        </ViewModes>
        <Zoomer>
          <Ico w={8} h={8} c="#c2c2c2"><path d="M0 4h8" /></Ico>
          <Slider />
          <Ico w={8} h={8} c="#c2c2c2"><path d="M0 4h8M4 0v8" /></Ico>
          <Percent>150%</Percent>
        </Zoomer>
      </StatusBar>

      <Taskbar>
        <StartButton>
          <svg width="16" height="16" viewBox="0 0 16 16"><path d="M0 2.200 6.800 1.300v6.300H0zM7.600 1.200 16 0v7.600H7.600zM0 8.400h6.800v6.300L0 13.800zM7.600 8.400H16V16l-8.400-1.200z" fill="#fff" /></svg>
        </StartButton>
        <TaskSearch>
          <Ico w={17} h={17} c="#333" sw={1.4}><circle cx="11" cy="6" r="4.800" /><path d="m7.500 9.500-6.500 7" /></Ico>
          <TaskSearchText>Type here to search</TaskSearchText>
          <SearchArt />
        </TaskSearch>
        <TaskView>
          <Ico w={18} h={16} c="#d8d8d8" sw={1.1}><path d="M1 0v2.500h11V0M1 16v-2.500h11V16M1 4.500h11v7H1zM15.500 0v3M15.500 6v10" /><path d="M14.500 4h2" strokeWidth="2" /></Ico>
        </TaskView>
        {apps.map((a, i) => <TaskApp key={i} $run={a.run} $active={a.active}>{a.icon}</TaskApp>)}
        <TaskScroller>
          <Ico w={9} h={6} c="#333" sw={1.5}><path d="m1 5 3.500-3.500L8 5" /></Ico>
          <Ico w={9} h={6} c="#333" sw={1.5}><path d="m1 1 3.500 3.500L8 1" /></Ico>
        </TaskScroller>
        <Tray>
          <TrayItem $w={14}>
            <svg width="12" height="26" viewBox="0 0 12 26"><path d="M6 6V3.500C6 1 10 1 10 4" fill="none" stroke="#8b7a55" strokeWidth="1.600" /><path d="M6 5c2.500 3 4.500 7 4 10L8 20 6.500 24h-1L4 20 2 15C1.500 12 3.500 8 6 5z" fill="#62b0ec" /><path d="M6 7v15" stroke="#4791cf" strokeWidth=".8" /></svg>
          </TrayItem>
          <Weather>Rain...</Weather>
          <TrayItem $w={26}><Ico w={13} h={8} c="#e8e8e8" sw={1.2}><path d="m1 7 5.500-5.500L12 7" /></Ico></TrayItem>
          <TrayItem $w={22}>
            <svg width="18" height="16" viewBox="0 0 18 16"><path d="M3.500 12A3.300 3.300 0 0 1 3 5.500 5 5 0 0 1 12.500 4 4 4 0 0 1 15 11l-2 1z" fill="#1976c9" /><circle cx="12.500" cy="11" r="4.500" fill="#d63a31" /><path d="m10.800 9.300 3.400 3.400M14.200 9.300l-3.400 3.400" stroke="#fff" strokeWidth="1.300" /></svg>
          </TrayItem>
          <TrayItem $w={24}>
            <svg width="12" height="18" viewBox="0 0 12 18"><rect x="2" y="1" width="8" height="11.500" rx="1" fill="#f5f5f5" /><path d="M1.500 11v2.500h9V11M6 13v3M3.500 16.500h5" fill="none" stroke="#eee" /></svg>
          </TrayItem>
          <TrayItem $w={24}><Ico w={17} h={14} c="#e0e0e0" sw={1.1}><path d="M1 5h3l4-3.500v11L4 9H1zM10 5q1.500 2 0 4M12 3.500q3 3.500 0 7M14 2q4 5 0 10" /></Ico></TrayItem>
          <Clock>17:03<br />07/10/2022</Clock>
          <TrayItem $w={48}>
            <svg width="24" height="24" viewBox="0 0 24 24"><path d="M1 1h16v13H9l-4 4v-4H1z" fill="#fff" /><path d="M3.500 4.500h11M3.500 7.500h11M3.500 10.500h6" stroke="#444" strokeWidth="1.100" /><circle cx="16" cy="16" r="7.200" fill="#2f2f2f" stroke="#9a9a9a" /><text x="16" y="20" fontSize="11" fontWeight="700" textAnchor="middle" fill="#fff" fontFamily="Open Sans, sans-serif">7</text></svg>
          </TrayItem>
          <DesktopEdge />
        </Tray>
      </Taskbar>

      <FormatObject />
      <Pointer>
        <svg width="14" height="20" viewBox="0 0 14 20"><path d="M1 1v15.500l3.600-3.300 2.600 5.300 2.600-1.200-2.500-5 4.900-.5z" fill="#fff" stroke="#4a4a3a" strokeWidth="1.100" /></svg>
      </Pointer>
    </Screen>
  );
}
